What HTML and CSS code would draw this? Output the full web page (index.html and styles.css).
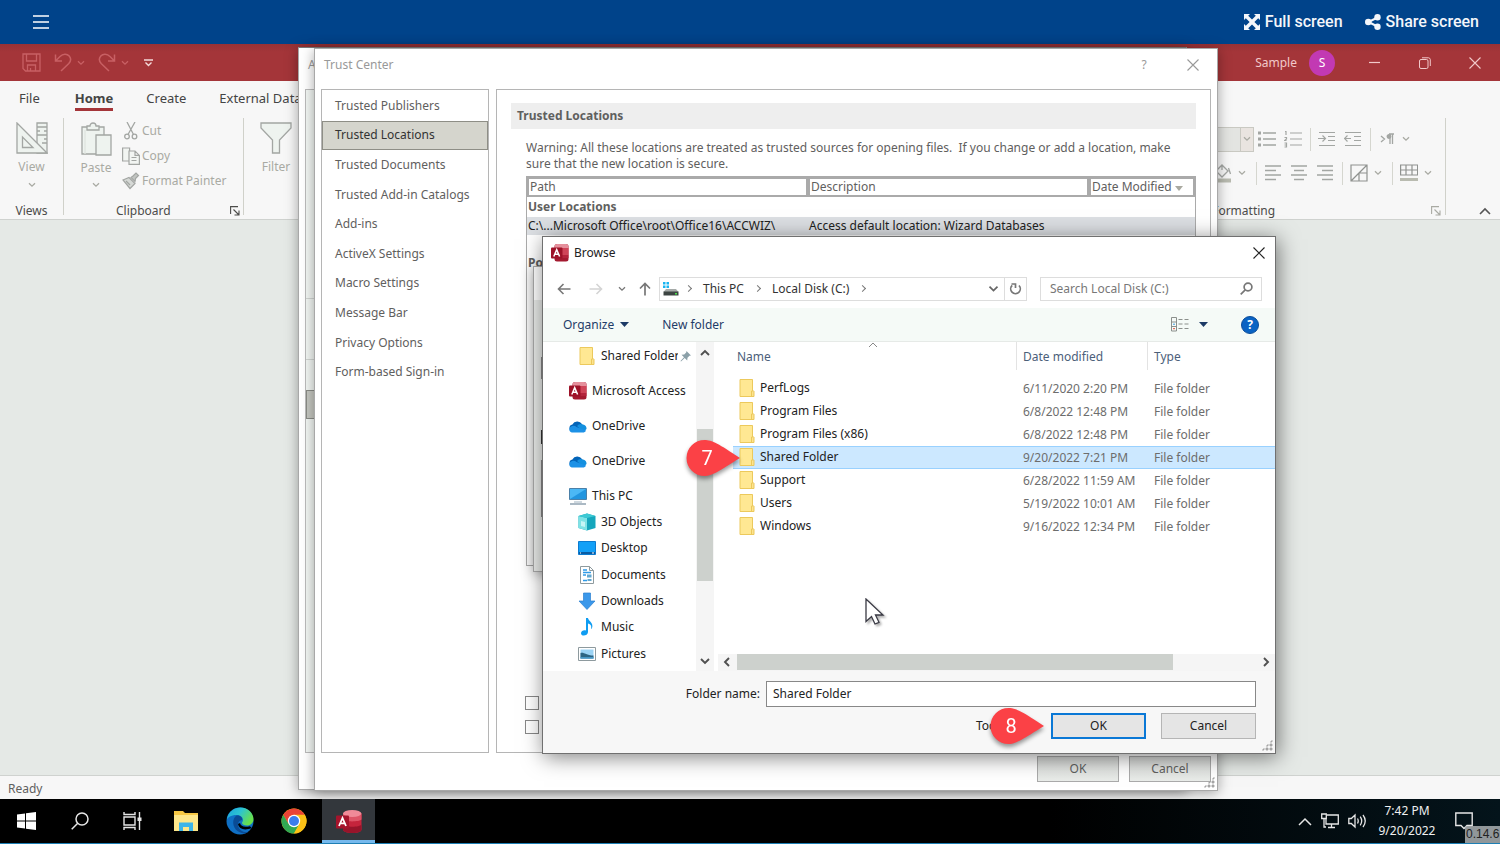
FILE: index.html
```html
<!DOCTYPE html>
<html lang="en">
<head>
<meta charset="UTF-8" />
<meta name="viewport" content="width=device-width, initial-scale=1" />
<title>Trusted Locations - Browse</title>
<link rel="stylesheet" href="styles.css">
</head>
<body>

<!-- shared icons -->
<svg class="sprite" aria-hidden="true">
  <symbol id="chev" viewBox="0 0 8 6"><path d="M1 1.2 4 4.2 7 1.2" fill="none" stroke="currentColor" stroke-width="1.3"/></symbol>
  <symbol id="close" viewBox="0 0 12 12"><path d="M.5.5l11 11M11.500.5l-11 11" fill="none" stroke="currentColor" stroke-width="1.1"/></symbol>
  <symbol id="launcher" viewBox="0 0 10 10"><path d="M.6 8V.6H8M3.500 3.500 9 9M9 4.500V9H4.500" fill="none" stroke="currentColor" stroke-width="1.100"/></symbol>
  <symbol id="folder" viewBox="0 0 16 18">
    <path d="M1 .5h12.500v11.500l1.500 1V17.500H1z" fill="#fbe08a"/>
    <path d="M1 .5h12.500V17.500H1z" fill="#ffe893"/>
    <path d="M1 .5h12.500V12M1 .5v17h14v-5.500h-2.500v5" fill="none" stroke="#ecc95c"/>
  </symbol>
  <symbol id="access" viewBox="0 0 26 24">
    <path d="M7 4v16c0 2 4 3.500 9.500 3.500S25.500 22 25.500 20V4z" fill="#c5243c"/>
    <path d="M7 15v5c0 2 4 3.500 9.500 3.500S25.500 22 25.500 20v-5c-2 3-16 3-18.500 0z" fill="#97142a"/>
    <path d="M7 4v6c2 2.500 16 2.500 18.500 0V4z" fill="#dd5467"/>
    <ellipse cx="16.200" cy="4" rx="9.200" ry="3.500" fill="#f08a98"/>
    <rect y="6" width="13" height="13" rx="1" fill="#a5142c"/>
    <path d="M3 16.500 6.500 8.500 10 16.500M4.300 13.800h4.400" fill="none" stroke="#fff" stroke-width="1.800"/>
  </symbol>
  <symbol id="access-app" viewBox="0 0 18 18">
    <rect x="3.500" width="14" height="17.500" rx="2.500" fill="#a3192f"/>
    <path d="M3.500 6V2.500A2.500 2.500 0 0 1 6 0h9a2.500 2.500 0 0 1 2.500 2.500V6z" fill="#e5909c"/>
    <path d="M3.500 4h14v7h-14z" fill="#cf4458"/>
    <path d="M3.500 11h14v3h-14z" fill="#b3233b"/>
    <rect y="3.500" width="11.500" height="11" rx="1" fill="#9d1228"/>
    <path d="M2.800 12.500 5.700 5.700l2.900 6.800M3.900 10.300h3.600" fill="none" stroke="#fff" stroke-width="1.500"/>
  </symbol>
  <symbol id="cloud" viewBox="0 0 18 13">
    <path d="M4 12a3.800 3.800 0 0 1-.6-7.500A5.500 5.500 0 0 1 13 4l2 4z" fill="#0364b8"/>
    <path d="M8 6a5 5 0 0 1 6-1.500 4 4 0 0 1 3.500 4.500l-3 3z" fill="#1490df"/>
    <path d="M4 12.500c-3 0-4-2-3.500-4 1-3 5-3.500 7-1.500l9.500 3.500c-.5 1.500-2 2-3 2z" fill="#1c91e6"/>
  </symbol>
</svg>

<header class="topbar">
  <button class="menu-btn" aria-label="Menu"><svg width="16" height="14" viewBox="0 0 16 14"><path d="M0 1h16M0 7h16M0 13h16" stroke="#fff" stroke-width="1.500"/></svg></button>
  <nav class="top-actions">
    <button><svg width="16" height="16" viewBox="0 0 16 16"><path d="M0 0h6L4.200 1.800 8 5.600l3.800-3.800L10 0h6v6l-1.800-1.800L10.400 8l3.800 3.800L16 10v6h-6l1.800-1.800L8 10.400l-3.800 3.800L6 16H0v-6l1.800 1.800L5.600 8 1.800 4.200 0 6z" fill="currentColor"/></svg>Full screen</button>
    <button><svg width="16" height="16" viewBox="0 0 16 16"><path d="M3.500 8 12.500 3.500M3.500 8l9 4.500" stroke="currentColor" stroke-width="2"/><circle cx="3.300" cy="8" r="3.300" fill="currentColor"/><circle cx="12.500" cy="3.300" r="3.200" fill="currentColor"/><circle cx="12.500" cy="12.700" r="3.200" fill="currentColor"/></svg>Share screen</button>
  </nav>
</header>

<main class="desktop">

  <!-- Access main window -->
  <section class="app">
    <div class="titlebar">
      <div class="quick">
        <button aria-label="Save"><svg width="19" height="19" viewBox="0 0 19 19" fill="none" stroke="currentColor" stroke-width="1.300"><path d="M1 1h17v17H3.500L1 15.500zM4.500 1v7h10V1M5.500 18v-6h8v6M8.500 15v3"/></svg></button>
        <button aria-label="Undo"><svg width="18" height="19" viewBox="0 0 18 19" fill="none" stroke="currentColor" stroke-width="1.500"><path d="M1.500 1.500V8H8M1.500 8l4.500-4.500C9 .5 13 .5 15.200 3c2 2.300 1.800 5-.4 7.500L7 18"/></svg></button>
        <svg class="chev" width="8" height="6"><use href="#chev"/></svg>
        <button aria-label="Redo"><svg width="18" height="19" viewBox="0 0 18 19" fill="none" stroke="currentColor" stroke-width="1.500"><path d="M16.500 1.500V8H10M16.500 8 12 3.500C9 .5 5 .5 2.800 3c-2 2.300-1.800 5 .4 7.500L11 18"/></svg></button>
        <svg class="chev" width="8" height="6"><use href="#chev"/></svg>
        <button class="more" aria-label="Customize toolbar"><svg width="9" height="8" viewBox="0 0 9 8" fill="none" stroke="currentColor" stroke-width="1.400"><path d="M0 1h9M1.500 3.500l3 3 3-3"/></svg></button>
      </div>
      <div class="account">
        <span>Sample</span><span class="avatar">S</span>
        <button aria-label="Minimize"><svg width="12" height="12" viewBox="0 0 12 12"><path d="M0 5.500h11" stroke="currentColor" stroke-width="1.200"/></svg></button>
        <button aria-label="Restore"><svg width="12" height="12" viewBox="0 0 12 12" fill="none" stroke="currentColor"><rect x=".5" y="2.500" width="8.500" height="9" rx="1.500"/><path d="M3 .8h6.500A2 2 0 0 1 11.300 2.500V9"/></svg></button>
        <button aria-label="Close"><svg width="12" height="12"><use href="#close"/></svg></button>
      </div>
    </div>

    <nav class="tabs">
      <a href="#">File</a>
      <a href="#" class="active">Home</a>
      <a href="#">Create</a>
      <a href="#">External Data</a>
    </nav>

    <div class="ribbon">
      <div class="group views">
        <button class="big"><svg width="32" height="32" viewBox="0 0 32 32" fill="#eef3ef" stroke="#a3a6a3" stroke-width="1.300"><path d="M21 1h10v30H21zM31 5h-5M31 9h-3M31 13h-5M31 17h-3M31 21h-5M21 5h5M21 9h3M21 13h5"/><path d="M1 1v30h30z"/><path d="M6.500 15v10.500H17z"/></svg>View<svg class="chev" width="8" height="6"><use href="#chev"/></svg></button>
        <div class="group-label">Views</div>
      </div>
      <div class="group clipboard">
        <div class="group-body">
          <button class="big"><svg width="32" height="34" viewBox="0 0 32 34" fill="#eef3ef" stroke="#a3a6a3" stroke-width="1.300"><path d="M2 5h22v27H2z"/><path d="M5 8v24" stroke="#dfe3df"/><path d="M7 8V4h3c0-4 6-4 6 0h3v4z"/><path d="M16 13h15v20H16z"/></svg>Paste<svg class="chev" width="8" height="6"><use href="#chev"/></svg></button>
          <div class="small-list">
            <button><svg width="18" height="18" viewBox="0 0 18 18" fill="none" stroke="#a3a6a3" stroke-width="1.300"><path d="M5 0l6.500 12.500M13 0 6 12.500"/><circle cx="5" cy="14.500" r="2.300"/><circle cx="12.500" cy="14.500" r="2.300"/></svg>Cut</button>
            <button><svg width="18" height="18" viewBox="0 0 18 18" fill="#f2f5f2" stroke="#a3a6a3" stroke-width="1.200"><path d="M.6 1h7v13h-7z"/><path d="M7 4h6l4.400 4.400V17.400H7zM13 4v4.400h4.400M9.500 10.500h5M9.500 13.500h5"/></svg>Copy</button>
            <button><svg width="18" height="18" viewBox="0 0 18 18" fill="#d6d9d6" stroke="#a3a6a3" stroke-width="1.200"><path d="M1 8l6-2.500 6 6L8 16.500z"/><path d="M9 5.500l2-1.500 3-3 2.500 2.500-3 3-.5 3z" fill="#c2c5c2"/><path d="M4 9l4 4" /></svg>Format Painter</button>
          </div>
        </div>
        <div class="group-label">Clipboard<svg width="10" height="10"><use href="#launcher"/></svg></div>
      </div>
      <div class="group filter">
        <button class="big"><svg width="32" height="32" viewBox="0 0 32 32" fill="#eef3ef" stroke="#a3a6a3" stroke-width="1.300"><path d="M1 1h30v5L19.500 18v13h-7V18L1 6z"/></svg>Filter</button>
      </div>
      <div class="group formatting">
        <div class="tool-row">
          <div class="combo"><svg class="chev" width="8" height="6"><use href="#chev"/></svg></div>
          <button aria-label="Bullets"><svg width="18" height="18" viewBox="0 0 18 18" stroke="#a3a6a3" stroke-width="1.300"><path d="M5 3h13M5 9h13M5 15h13"/><path d="M0 3h3M0 9h3M0 15h3" stroke-width="3"/></svg></button>
          <button aria-label="Numbering"><svg width="18" height="18" viewBox="0 0 18 18" fill="none" stroke="#a3a6a3" stroke-width="1.200"><path d="M6 3h12M6 9h12M6 15h12M1 1.500h1V5M.5 7.500h2V9l-2 1.500h2M.5 13h2v4h-2M.5 15h2"/></svg></button>
          <span class="vsep"></span>
          <button aria-label="Increase indent"><svg width="18" height="18" viewBox="0 0 18 18" fill="none" stroke="#a3a6a3" stroke-width="1.200"><path d="M1 2.500h16M10 6.500h7M10 10.500h7M1 15.500h16M0 8.500h7M4.500 5.500l3 3-3 3"/></svg></button>
          <button aria-label="Decrease indent"><svg width="18" height="18" viewBox="0 0 18 18" fill="none" stroke="#a3a6a3" stroke-width="1.200"><path d="M1 2.500h16M10 6.500h7M10 10.500h7M1 15.500h16M0 8.500h7M3.500 5.500l-3 3 3 3"/></svg></button>
          <span class="vsep"></span>
          <button aria-label="Text direction"><svg width="14" height="12" viewBox="0 0 14 12" fill="none" stroke="#a3a6a3" stroke-width="1.300"><path d="M1 3l3.500 3L1 9M10 1v10M12.500 1v10M14 1H9"/><circle cx="9" cy="3.500" r="1.800" fill="#a3a6a3"/></svg></button>
          <svg class="chev" width="12" height="6"><use href="#chev"/></svg>
        </div>
        <div class="tool-row second">
          <button aria-label="Background color"><svg width="20" height="20" viewBox="0 0 20 20" fill="none" stroke="#a3a6a3" stroke-width="1.300"><path d="M3 8l6-6 6 6-6 6zM9 2v5M15.500 5l2 6"/><path d="M1 17.500h17" stroke="#b9bbb0" stroke-width="4"/></svg></button>
          <svg class="chev" width="12" height="6"><use href="#chev"/></svg>
          <span class="vsep wide"></span>
          <button aria-label="Align left"><svg width="16" height="18" viewBox="0 0 16 18" stroke="#a3a6a3" stroke-width="1.300"><path d="M0 2h16M0 6.500h11M0 11h16M0 15.500h11"/></svg></button>
          <button aria-label="Center"><svg width="16" height="18" viewBox="0 0 16 18" stroke="#a3a6a3" stroke-width="1.300"><path d="M0 2h16M3 6.500h10M0 11h16M3 15.500h10"/></svg></button>
          <button aria-label="Align right"><svg width="16" height="18" viewBox="0 0 16 18" stroke="#a3a6a3" stroke-width="1.300"><path d="M0 2h16M5 6.500h11M0 11h16M5 15.500h11"/></svg></button>
          <span class="vsep"></span>
          <button aria-label="Gridlines"><svg width="18" height="18" viewBox="0 0 18 18" fill="none" stroke="#8f928f" stroke-width="1.200"><path d="M1 1h16v16H1zM1 17 17 1M9 9v8M9 9h8"/></svg></button>
          <svg class="chev" width="12" height="6"><use href="#chev"/></svg>
          <span class="vsep wide"></span>
          <button aria-label="Alternate row color"><svg width="18" height="18" viewBox="0 0 18 18" fill="none" stroke="#8f928f" stroke-width="1.200"><path d="M.6 1h17v10H.6zM.6 6h17M6 1v10M12 1v10"/><path d="M0 15.500h18" stroke="#b9bbb0" stroke-width="3"/></svg></button>
          <svg class="chev" width="12" height="6"><use href="#chev"/></svg>
        </div>
        <div class="group-label">Text Formatting<svg width="10" height="10"><use href="#launcher"/></svg></div>
      </div>
      <button class="collapse" aria-label="Collapse the ribbon"><svg width="12" height="8" viewBox="0 0 12 8"><path d="M1 7l5-5 5 5" fill="none" stroke="#555" stroke-width="1.600"/></svg></button>
    </div>

    <div class="workspace"></div>
    <div class="statusbar">Ready</div>
  </section>

  <!-- Access Options, mostly covered by Trust Center -->
  <section class="window options">
    <div class="window-title">Access Options</div>
    <div class="options-list"><span class="rule"></span><span class="rule"></span><span class="picked"></span></div>
  </section>

  <section class="window trust">
    <div class="window-title">
      <span>Trust Center</span>
      <button aria-label="Help">?</button>
      <button aria-label="Close"><svg width="12" height="12"><use href="#close"/></svg></button>
    </div>
    <div class="trust-body">
      <nav class="trust-nav">
        <div class="trust-links">
          <a href="#">Trusted Publishers</a>
          <a href="#" class="current">Trusted Locations</a>
          <a href="#">Trusted Documents</a>
          <a href="#">Trusted Add-in Catalogs</a>
          <a href="#">Add-ins</a>
          <a href="#">ActiveX Settings</a>
          <a href="#">Macro Settings</a>
          <a href="#">Message Bar</a>
          <a href="#">Privacy Options</a>
          <a href="#">Form-based Sign-in</a>
        </div>
      </nav>
      <div class="trust-panel">
        <h2>Trusted Locations</h2>
        <p>Warning: All these locations are treated as trusted sources for opening files.&nbsp; If you change or add a location, make sure that the new location is secure.</p>
        <div class="locations">
          <table>
            <colgroup><col class="c-path"><col class="c-desc"><col class="c-date"></colgroup>
            <thead>
              <tr><th>Path</th><th>Description</th><th>Date Modified <svg width="8" height="5" viewBox="0 0 8 5"><path d="M0 0h8L4 5z" fill="#a9a9a0"/></svg></th></tr>
            </thead>
            <tbody>
              <tr class="section"><td colspan="3">User Locations</td></tr>
              <tr class="chosen"><td>C:\...Microsoft Office\root\Office16\ACCWIZ\</td><td>Access default location: Wizard Databases</td><td></td></tr>
              <tr class="blank"><td colspan="3"></td></tr>
              <tr class="section"><td colspan="3">Policy Locations</td></tr>
            </tbody>
          </table>
        </div>
        <div class="checks">
          <input type="checkbox" aria-label="Allow Trusted Locations on my network">
          <input type="checkbox" aria-label="Disable all Trusted Locations">
        </div>
      </div>
    </div>
    <div class="trust-footer">
      <button>OK</button>
      <button>Cancel</button>
    </div>
    <span class="grip"></span>
  </section>

  <!-- Trusted Location dialog under the file picker -->
  <section class="window location-dialog"><span class="field path-field"></span><span class="field check-field"></span><span class="field desc-field"></span></section>

  <section class="window browse">
    <div class="browse-title">
      <svg width="18" height="18"><use href="#access-app"/></svg>
      <span>Browse</span>
      <button aria-label="Close"><svg width="12" height="12"><use href="#close"/></svg></button>
    </div>

    <div class="browse-nav">
      <button aria-label="Back"><svg width="14" height="12" viewBox="0 0 14 12" fill="none" stroke="#777" stroke-width="1.600"><path d="M13.500 6H1.500M6.500 1 1.500 6l5 5"/></svg></button>
      <button class="forward" aria-label="Forward"><svg width="14" height="12" viewBox="0 0 14 12" fill="none" stroke="#d4d4d4" stroke-width="1.600"><path d="M.5 6h12M7.500 1l5 5-5 5"/></svg></button>
      <button class="recent" aria-label="Recent locations"><svg width="8" height="6"><use href="#chev"/></svg></button>
      <button class="up" aria-label="Up"><svg width="12" height="14" viewBox="0 0 12 14" fill="none" stroke="#777" stroke-width="1.700"><path d="M6 13.500V1.500M1 6.500l5-5 5 5"/></svg></button>
      <div class="address">
        <svg width="17" height="14" viewBox="0 0 17 14"><path d="M1 0h2.500v2.500H1zM4.500 0H7v2.500H4.500zM1 3.500h2.500V6H1zM4.500 3.500H7V6H4.500z" fill="#19b5f1"/><path d="M4 7h10l2.500 3h-15z" fill="#a5aaa8"/><path d="M1.500 9.500h15V13.500h-15z" fill="#3d4442"/><path d="M13 11h2v1.500h-2z" fill="#4be04b"/></svg>
        <span class="crumb-sep"></span><a href="#">This PC</a>
        <span class="crumb-sep"></span><a href="#">Local Disk (C:)</a>
        <span class="crumb-sep"></span>
        <button class="addr-drop" aria-label="Previous locations"><svg width="11" height="8"><use href="#chev"/></svg></button>
        <button class="refresh" aria-label="Refresh"><svg width="13" height="13" viewBox="0 0 13 13" fill="none" stroke="#777" stroke-width="1.700"><path d="M10 3.500A4.800 4.800 0 1 1 3.200 3.300M2.500 2h4v4"/></svg></button>
      </div>
      <div class="search">
        <input type="text" placeholder="Search Local Disk (C:)" aria-label="Search Local Disk (C:)">
        <svg width="13" height="13" viewBox="0 0 13 13" fill="none" stroke="#777" stroke-width="1.700"><circle cx="8" cy="5" r="3.900"/><path d="M5.200 7.800.7 12.300"/></svg>
      </div>
    </div>

    <div class="browse-tools">
      <button>Organize <svg width="9" height="5" viewBox="0 0 9 5"><path d="M0 0h9L4.500 5z" fill="#1c3a66"/></svg></button>
      <button>New folder</button>
      <button class="layout" aria-label="Change your view"><svg width="18" height="15" viewBox="0 0 18 15" fill="none" stroke="#8b8f8c"><path d="M.5.5h5v13.500h-5zM.5 5h5M.5 9.500h5"/><path d="M7.500 2.500h4M13.500 2.500h4M7.500 7h4M13.500 7h4M7.500 11.500h4M13.500 11.500h4" stroke-width="1.200"/><path d="M2 7.200h2" stroke="#3b9be0"/><path d="M2 11.700h2" stroke="#e0503b"/></svg><svg width="9" height="5" viewBox="0 0 9 5"><path d="M0 0h9L4.500 5z" fill="#1c3a66"/></svg></button>
      <button class="help" aria-label="Help">?</button>
    </div>

    <div class="browse-main">
      <div class="tree">
        <ul>
          <li class="nested"><a href="#"><svg width="18" height="18"><use href="#folder"/></svg><span class="cut">Shared Folder</span><svg class="pin" width="11" height="11" viewBox="0 0 11 11"><path d="M6.500 0 11 4.500l-1.500.3-2 2-.3 2.700L4.700 7 1 10.500.5 10 4 6.300 1.500 3.800l2.700-.3 2-2z" fill="#8ba0a8"/></svg></a></li>
          <li><a href="#"><svg width="18" height="18"><use href="#access-app"/></svg>Microsoft Access</a></li>
          <li><a href="#"><svg width="18" height="13"><use href="#cloud"/></svg>OneDrive</a></li>
          <li><a href="#"><svg width="18" height="13"><use href="#cloud"/></svg>OneDrive</a></li>
          <li><a href="#"><svg width="18" height="17" viewBox="0 0 18 17"><path d="M.5.5h17v11H.5z" fill="#4bb8f5" stroke="#4b80a8"/><path d="M1 11 17 1v10z" fill="#2195df"/><path d="M5 14h8" stroke="#9fb2c0"/><path d="M1 16h16" stroke="#8fa2b0" stroke-width="1.500"/></svg>This PC</a></li>
        </ul>
        <ul class="sub">
          <li><a href="#"><svg width="18" height="18" viewBox="0 0 18 18"><path d="M.5 3 9 .5 17.500 3v12L9 17.500.5 15z" fill="#15a6bc"/><path d="M.5 3 9 5v12.500L.5 15z" fill="#7fe3e6"/><path d="M.5 3 9 .5 17.500 3 9 5z" fill="#3cc9d4"/><path d="M3 8l4 1v5l-4-1z" fill="#c5f5f5"/></svg>3D Objects</a></li>
          <li><a href="#"><svg width="18" height="14" viewBox="0 0 18 14"><path d="M.5.5h17v13H.5z" fill="#13a0f7" stroke="#0c7bd0"/><path d="M1 12h16" stroke="#0a5ca3" stroke-width="2"/><path d="M2 12h1M14 12h2" stroke="#fff"/></svg>Desktop</a></li>
          <li><a href="#"><svg width="18" height="18" viewBox="0 0 18 18"><path d="M2.500.5h9l4 4v13h-13z" fill="#fff" stroke="#8e9a9e"/><path d="M11.500.5v4h4" fill="none" stroke="#8e9a9e"/><path d="M5 4h4M5 6.500h8M5 9h3M5 14.500h4" stroke="#2f9be8" stroke-width="1.300"/><path d="M9 8.500h4.500v3H9zM5 11.500h3M9.500 13h4v2h-4z" fill="#62a8d0"/></svg>Documents</a></li>
          <li><a href="#"><svg width="18" height="18" viewBox="0 0 18 18"><path d="M5.500 1h7v8H17L9 17.500 1 9h4.500z" fill="#3b98ea" stroke="#2a7fd0" stroke-width=".7"/></svg>Downloads</a></li>
          <li><a href="#"><svg width="18" height="18" viewBox="0 0 18 18"><path d="M8 0h2c.3 3 5 4 4.300 9-.4 2-1.300 2-1.300 1.500.8-2.500-.5-4.500-3-5V14c0 4-7 5-7 1.300 0-2.500 3-3.800 5-2.800z" fill="#0f9df2"/></svg>Music</a></li>
          <li><a href="#"><svg width="18" height="14" viewBox="0 0 18 14"><path d="M.5.5h17v13H.5z" fill="#fff" stroke="#8e9a9e"/><path d="M2.500 2.500h13v9h-13z" fill="#9bd3f5"/><path d="M2.500 6c3-1.500 5 2 13 2.500v3h-13z" fill="#2d6583"/><path d="M2.500 10.200h13v1.300h-13z" fill="#4ba3d6"/></svg>Pictures</a></li>
        </ul>
      </div>
      <div class="vscroll">
        <svg width="10" height="7" viewBox="0 0 10 7"><path d="M1 6l4-4 4 4" fill="none" stroke="#505050" stroke-width="1.900"/></svg>
        <span class="thumb"></span>
        <svg width="10" height="7" viewBox="0 0 10 7"><path d="M1 1l4 4 4-4" fill="none" stroke="#505050" stroke-width="1.900"/></svg>
      </div>
      <div class="files">
        <svg class="sort" width="10" height="6" viewBox="0 0 10 6"><path d="M1 5l4-4 4 4" fill="none" stroke="#888"/></svg>
        <table>
          <colgroup><col class="f-name"><col class="f-date"><col></colgroup>
          <thead>
            <tr><th>Name</th><th>Date modified</th><th>Type</th></tr>
          </thead>
          <tbody>
            <tr><td><svg width="16" height="18"><use href="#folder"/></svg>PerfLogs</td><td>6/11/2020 2:20 PM</td><td>File folder</td></tr>
            <tr><td><svg width="16" height="18"><use href="#folder"/></svg>Program Files</td><td>6/8/2022 12:48 PM</td><td>File folder</td></tr>
            <tr><td><svg width="16" height="18"><use href="#folder"/></svg>Program Files (x86)</td><td>6/8/2022 12:48 PM</td><td>File folder</td></tr>
            <tr class="selected"><td><svg width="16" height="18"><use href="#folder"/></svg>Shared Folder</td><td>9/20/2022 7:21 PM</td><td>File folder</td></tr>
            <tr><td><svg width="16" height="18"><use href="#folder"/></svg>Support</td><td>6/28/2022 11:59 AM</td><td>File folder</td></tr>
            <tr><td><svg width="16" height="18"><use href="#folder"/></svg>Users</td><td>5/19/2022 10:01 AM</td><td>File folder</td></tr>
            <tr><td><svg width="16" height="18"><use href="#folder"/></svg>Windows</td><td>9/16/2022 12:34 PM</td><td>File folder</td></tr>
          </tbody>
        </table>
        <div class="hscroll">
          <svg width="7" height="10" viewBox="0 0 7 10"><path d="M6 1 2 5l4 4" fill="none" stroke="#505050" stroke-width="1.900"/></svg>
          <span class="track"><span class="thumb"></span></span>
          <svg width="7" height="10" viewBox="0 0 7 10"><path d="M1 1l4 4-4 4" fill="none" stroke="#505050" stroke-width="1.900"/></svg>
        </div>
      </div>
    </div>

    <div class="browse-footer">
      <div class="name-row">
        <label for="folderName">Folder name:</label>
        <input type="text" id="folderName" value="Shared Folder">
      </div>
      <div class="button-row">
        <button class="tools">Tools</button>
        <button class="default">OK</button>
        <button>Cancel</button>
      </div>
    </div>
    <span class="grip"></span>
  </section>

  <!-- step markers -->
  <div class="step step-7"><svg width="56" height="38" viewBox="0 0 56 38"><path d="M18.500 1C26 1 33 5 54 19 33 32 26 37 18.500 37A18 18 0 0 1 18.500 1z" fill="#fb4146"/></svg><span>7</span></div>
  <div class="step step-8"><svg width="56" height="38" viewBox="0 0 56 38"><path d="M18.500 1C26 1 33 5 54 19 33 32 26 37 18.500 37A18 18 0 0 1 18.500 1z" fill="#fb4146"/></svg><span>8</span></div>

  <svg class="pointer" width="20" height="28" viewBox="0 0 20 28"><path d="M1 1v22.500l5.500-5L10 26l4-1.700-3.500-7.300H18z" fill="#fff" stroke="#3a3a44" stroke-width="1.300"/></svg>
</main>

<footer class="taskbar">
  <button aria-label="Start"><svg width="19" height="18" viewBox="0 0 19 18"><path d="M0 2.500 8 1.400v7.100H0zM9 1.200 19 0v8.500H9zM0 9.500h8v7.100l-8-1.100zM9 9.500h10V18L9 16.800z" fill="#fff"/></svg></button>
  <button aria-label="Search"><svg width="18" height="18" viewBox="0 0 18 18" fill="none" stroke="#e6e6e6" stroke-width="1.500"><circle cx="11" cy="7" r="6"/><path d="M6.700 11.300.7 17.300"/></svg></button>
  <button aria-label="Task view"><svg width="19" height="18" viewBox="0 0 19 18" fill="none" stroke="#e6e6e6" stroke-width="1.400"><path d="M1 5h11v8H1zM1 0v2.500h11V0M1 18v-2.500h11V18M16.500 0v18"/><path d="M14.500 5.500h4v3.500h-4z" fill="#e6e6e6" stroke="none"/></svg></button>
  <button class="pinned" aria-label="File Explorer"><svg width="24" height="21" viewBox="0 0 24 21"><path d="M0 0h9l2 2h13v18H0z" fill="#f6c744"/><path d="M0 4h24v16H0z" fill="#fde68a"/><path d="M5 20v-8.500h14V20h-4v-4H9v4z" fill="#3cb4e8"/></svg></button>
  <button class="pinned" aria-label="Edge"><svg width="28" height="28" viewBox="0 0 28 28"><defs><linearGradient id="eg" x1="0" y1="0" x2="1" y2=".5"><stop offset="0" stop-color="#1aa3dd"/><stop offset=".5" stop-color="#2cc3d2"/><stop offset="1" stop-color="#68e04c"/></linearGradient></defs><circle cx="14" cy="14" r="13.500" fill="#0f6fc4"/><path d="M.8 13C2 4 9 .5 14.500.5c8 0 13 6 13 11.500 0 4-3 6.500-6.500 6.500-3 0-5-1-5-2.500 0-1 1-1.500 1-3C17 10 14 8 10.500 8 5 8 1.500 10.500.8 13z" fill="url(#eg)"/><path d="M10.500 8.500c-5 3.500-4 12 1 15.500 4 2.500 8 3.500 10.500 1-4 1-10-2-10-7.500 0-3 2-4 4-4.500 1-2.500-2-5-5.500-4.500z" fill="#0a4b95"/><path d="M12 17c1 5 6.500 7 13.500 4 0 0-1-1.500-1.500-1.800-6 1.500-9 .3-10-3.200z" fill="#000"/></svg></button>
  <button class="pinned" aria-label="Chrome"><svg width="26" height="26" viewBox="0 0 26 26"><circle cx="13" cy="13" r="12.500" fill="#fbc116"/><path d="M2.200 6.700A12.500 12.500 0 0 1 23.800 6.700H13L7.600 16.100z" fill="#ea4335"/><path d="M2.200 6.700A12.500 12.500 0 0 0 13 25.500l5.400-9.400H7.600z" fill="#31a852"/><path d="M23.800 6.700A12.500 12.500 0 0 1 13 25.500l5.400-9.400L18 9z" fill="#fbc116"/><circle cx="13" cy="13" r="6.200" fill="#fff"/><circle cx="13" cy="13" r="5" fill="#3b7ded"/></svg></button>
  <button class="pinned running" aria-label="Access"><svg width="26" height="25"><use href="#access"/></svg></button>
  <div class="tray">
    <button aria-label="Show hidden icons"><svg width="14" height="9" viewBox="0 0 14 9"><path d="M1 8l6-6 6 6" fill="none" stroke="#e6e6e6" stroke-width="1.500"/></svg></button>
    <button aria-label="Network"><svg width="18" height="16" viewBox="0 0 18 16" fill="none" stroke="#e6e6e6" stroke-width="1.300"><path d="M6 2h11.300v9H5V6M10.500 11v3.500M7 14.500h7M.7 1h4.600v4.500H.7zM3 5.500V14h2"/></svg></button>
    <button aria-label="Volume"><svg width="19" height="16" viewBox="0 0 19 16" fill="none" stroke="#e6e6e6" stroke-width="1.300"><path d="M.8 5.500h2.500L7 2v12l-3.700-3.500H.8zM9.500 5.500q1.500 2.500 0 5M12.200 3.700q3 4.300 0 8.600M15 2q4.500 6 0 12"/></svg></button>
    <div class="clock"><span>7:42 PM</span><span>9/20/2022</span></div>
    <button class="notes" aria-label="Notifications"><svg width="18" height="18" viewBox="0 0 18 18"><path d="M.8 1h16.400v12.500H12l-3 3-3-3H.8z" fill="none" stroke="#e6e6e6" stroke-width="1.400"/></svg></button>
  </div>
  <span class="version">0.14.6</span>
</footer>

</body>
</html>
```

FILE: styles.css
```css
:root {
  --blue: #00438a;
  --access-red: #a43539;
  --ribbon: #f7f7f7;
  --canvas: #e5e9e6;
  --muted: #a9aaa3;
  --text: #5f605e;
}
* {
  box-sizing: border-box;
}
body {
  margin: 0;
  height: 100vh;
  display: flex;
  flex-direction: column;
  overflow: hidden;
  font-family: "Noto Sans", "Open Sans", sans-serif;
  font-size: 12px;
  line-height: 16px;
  color: var(--text);
}
button {
  font: inherit;
  color: inherit;
  background: none;
  border: 0;
  padding: 0;
  display: flex;
  align-items: center;
  justify-content: center;
}
input {
  font: inherit;
  margin: 0;
}
a {
  color: inherit;
  text-decoration: none;
}
ul {
  list-style: none;
  margin: 0;
  padding: 0;
}
svg {
  flex: none;
}
.sprite {
  position: absolute;
  width: 0;
  height: 0;
}

/* top bar */
.topbar {
  height: 44px;
  padding: 0 21px 0 33px;
  display: flex;
  align-items: center;
  justify-content: space-between;
  background: var(--blue);
  color: #f4f6fa;
  font: 500 16px/20px Roboto, sans-serif;
}
.top-actions {
  display: flex;
  gap: 22px;
}
.top-actions button {
  gap: 5px;
}

/* Access window */
.desktop {
  flex: 1;
  min-height: 0;
  position: relative;
  display: flex;
}
.app {
  flex: 1;
  display: flex;
  flex-direction: column;
  background: var(--canvas);
}
.titlebar {
  height: 37px;
  display: flex;
  align-items: center;
  justify-content: space-between;
  padding: 0 19px 0 22px;
  background: linear-gradient(#983135, var(--access-red) 8px);
}
.quick {
  display: flex;
  align-items: center;
  gap: 5px;
  color: #c86064;
}
.quick button:nth-of-type(2),
.quick button:nth-of-type(3) {
  margin-left: 8px;
}
.quick .more {
  margin-left: 10px;
  color: #f4d9da;
}
.account {
  display: flex;
  align-items: center;
  color: #f2c9ca;
}
.account button {
  width: 12px;
  margin-left: 38px;
}
.account .avatar + button {
  margin-left: 34px;
}
.avatar {
  width: 26px;
  height: 26px;
  margin-left: 12px;
  border-radius: 50%;
  background: #c239b3;
  color: #fff;
  text-align: center;
  line-height: 26px;
}
.tabs {
  height: 37px;
  padding: 8px 19px 0;
  display: flex;
  align-items: flex-start;
  background: var(--ribbon);
  font-size: 13px;
  line-height: 18px;
  color: #444;
  gap: 33px;
}
.tabs a:first-child {
  margin-right: 2px;
}
.tabs .active {
  font-weight: bold;
  border-bottom: 3px solid var(--access-red);
  padding-bottom: 1px;
}
.ribbon {
  height: 102px;
  padding-bottom: 4px;
  display: flex;
  background: var(--ribbon);
  border-bottom: 1px solid #cfd2cf;
  color: var(--muted);
}
.group {
  position: relative;
  display: flex;
  flex-direction: column;
  border-right: 1px solid #d0d1ca;
}
.group.filter {
  border: 0;
}
.views {
  width: 64px;
}
.clipboard {
  width: 180px;
}
.filter {
  width: 64px;
}
.big {
  flex-direction: column;
  justify-content: flex-start;
  padding-top: 4px;
  line-height: 18px;
  gap: 4px;
}
.big .chev {
  margin-top: 2px;
}
.group-body {
  display: flex;
}
.clipboard .big {
  width: 58px;
  margin-left: 3px;
  gap: 3px;
}
.small-list {
  display: flex;
  flex-direction: column;
  margin-left: -3px;
}
.small-list button {
  height: 25px;
  gap: 2px;
  justify-content: flex-start;
}
/* the labels reach past the group dividers */
.group-label {
  margin-top: auto;
  margin-bottom: -4px;
  display: flex;
  align-items: center;
  justify-content: center;
  color: #4c4c4a;
  line-height: 16px;
}
.clipboard .group-label {
  padding-left: 52px;
  padding-right: 3px;
  justify-content: space-between;
}
.formatting {
  width: 260px;
  margin-left: auto;
}
.formatting .group-label {
  justify-content: space-between;
  padding-right: 4px;
}
.formatting .group-label svg {
  color: var(--muted);
}
.tool-row {
  height: 34px;
  margin-top: 4px;
  display: flex;
  align-items: center;
}
.tool-row.second {
  margin: 0 0 0 24px;
}
.tool-row button {
  width: 26px;
}
.combo {
  width: 68px;
  height: 25px;
  border: 1px solid #c9c9c2;
  background: linear-gradient(90deg, #e3e4e1 53px, #c9c9c2 53px 54px, #e9e4e0 54px);
  display: flex;
  align-items: center;
  justify-content: flex-end;
  padding-right: 2px;
}
.vsep {
  width: 1px;
  height: 23px;
  margin: 0 3px 0 4px;
  background: #d5d6cf;
}
.vsep.wide {
  margin-left: 8px;
}
.collapse {
  width: 54px;
  padding: 88px 0 0 24px;
}
.workspace {
  flex: 1;
}
.statusbar {
  height: 24px;
  padding: 4px 8px 0;
  line-height: 18px;
  background: var(--ribbon);
  border-top: 1px solid #cfd2cf;
}

/* windows */
.window {
  position: absolute;
  background: #fff;
  border: 1px solid #a8a8a8;
  box-shadow: 0 2px 12px rgba(0, 0, 0, 0.35);
}
.window-title {
  height: 34px;
  display: flex;
  align-items: center;
  color: #999;
  padding-left: 9px;
}
.window-title span {
  flex: 1;
}
.options {
  left: 298px;
  top: 3px;
  bottom: 9px;
  width: 889px;
  border-top-color: #777;
}
.options .window-title {
  width: 18px;
  overflow: hidden;
  white-space: nowrap;
}
.options-list {
  height: 664px;
  margin: 7px 6px 0;
  border: 1px solid #bbb;
  background: #f3f7f4;
  display: flex;
  flex-direction: column;
}
.rule {
  height: 1px;
  background: #d2d6d3;
}
.rule:first-child {
  margin-top: 208px;
}
.rule + .rule {
  margin-top: 60px;
}
.picked {
  height: 29px;
  margin-top: 30px;
  background: #c6c8c1;
  border: 1px solid #8a8c86;
}
.trust {
  left: 314px;
  top: 4px;
  bottom: 8px;
  width: 904px;
  display: flex;
  flex-direction: column;
  padding: 0 6px;
}
.trust .window-title {
  height: 32px;
  padding: 0 12px 0 3px;
}
.trust .window-title button {
  width: 12px;
  margin-left: 37px;
}
.trust-body {
  flex: 1;
  margin-top: 8px;
  display: flex;
  gap: 7px;
}
.trust-nav {
  width: 168px;
  border: 1px solid #b5b5b5;
}
.trust-links {
  height: 297px;
  padding-top: 1px;
  display: flex;
  flex-direction: column;
}
.trust-links a {
  flex: 1;
  display: flex;
  align-items: center;
  padding-left: 12px;
  border: 1px solid transparent;
}
.trust-links .current {
  background: #d5d5cd;
  border-color: #8e8e86;
  color: #333;
}
.trust-panel {
  flex: 1;
  min-width: 0;
  border: 1px solid #b5b5b5;
  padding: 13px 14px 0;
  display: flex;
  flex-direction: column;
}
.trust-panel h2 {
  margin: 0;
  height: 26px;
  padding: 1px 0 0 6px;
  background: #eee;
  font-size: 12px;
  line-height: 24px;
}
.trust-panel p {
  margin: 11px 0 0 15px;
  line-height: 16px;
}
.locations {
  height: 390px;
  margin: 4px 0 0 15px;
  border: 1px solid #aaa;
}
.locations table {
  width: 100%;
  table-layout: fixed;
  border-spacing: 0;
}
.locations th {
  height: 20px;
  padding: 0 1px;
  border: 2px solid #aaa;
  font-weight: normal;
  text-align: left;
  line-height: 16px;
  white-space: nowrap;
}
.locations td {
  height: 18px;
  padding: 0 1px;
  line-height: 18px;
  white-space: nowrap;
}
.c-path,
.c-desc {
  width: 281px;
}
.locations .section td {
  height: 20px;
  font-weight: bold;
}
.locations .chosen {
  background: #dcdfe3;
  color: #222;
}
.checks {
  margin: auto 0 18px 14px;
  display: flex;
  flex-direction: column;
  gap: 10px;
}
.checks input {
  appearance: none;
  width: 14px;
  height: 14px;
  border: 1px solid #888;
  background: #fff;
}
.trust-footer {
  display: flex;
  justify-content: flex-end;
  gap: 10px;
  padding: 3px 0 8px;
}
.trust-footer button {
  width: 82px;
  height: 26px;
  border: 1px solid #aaa;
  background: linear-gradient(#d6d8d6, #e9ece9);
}
.grip {
  position: absolute;
  right: 2px;
  bottom: 2px;
  width: 12px;
  height: 12px;
  background: radial-gradient(circle, #a5a5a5 1px, transparent 2px) 0 0 / 4px 4px;
  clip-path: polygon(100% 0, 100% 100%, 0 100%);
}
.location-dialog {
  left: 533px;
  top: 222px;
  width: 600px;
  height: 306px;
  padding-left: 7px;
  background: linear-gradient(#fff 33px, #e9ebe9 33px);
}
.field {
  display: block;
  border: 1px solid #888;
}
.path-field {
  margin-top: 90px;
  height: 22px;
}
.check-field {
  margin-top: 51px;
  height: 14px;
  border-color: #333;
}
.desc-field {
  margin-top: 16px;
  height: 57px;
}

/* browse dialog */
.browse {
  left: 542px;
  top: 192px;
  bottom: 45px;
  width: 734px;
  display: flex;
  flex-direction: column;
  border-color: #707070;
  box-shadow: 2px 3px 20px rgba(0, 0, 0, 0.5);
  color: #222;
}
.browse-title {
  height: 32px;
  padding: 0 10px 0 8px;
  display: flex;
  align-items: center;
  gap: 5px;
}
.browse-title button {
  margin-left: auto;
}
.browse-nav {
  height: 39px;
  padding: 0 13px 0 8px;
  display: flex;
  align-items: center;
  color: #777;
}
.browse-nav > button {
  width: 26px;
  margin-right: 6px;
}
.browse-nav > .forward {
  margin-right: 3px;
}
.browse-nav > .recent {
  width: 20px;
  margin: 0;
}
.browse-nav > .up {
  margin: 0 1px 0 0;
}
.address {
  flex: 1;
  height: 24px;
  display: flex;
  align-items: center;
  border: 1px solid #ddd;
  padding-left: 2px;
  color: #333;
}
.address a {
  margin-right: 4px;
}
.crumb-sep {
  width: 5px;
  height: 5px;
  margin: 0 12px 0 7px;
  border: solid #777;
  border-width: 1px 1px 0 0;
  transform: rotate(45deg);
}
.addr-drop {
  margin-left: auto;
  width: 22px;
  color: #666;
}
.refresh {
  width: 22px;
  height: 22px;
  border-left: 1px solid #ddd;
}
.search {
  width: 222px;
  height: 24px;
  margin-left: 13px;
  padding: 0 8px 0 9px;
  display: flex;
  align-items: center;
  border: 1px solid #ddd;
}
.search input {
  flex: 1;
  min-width: 0;
  border: 0;
  padding: 0;
  outline: none;
}
.search input::placeholder {
  color: #777;
}
.browse-tools {
  height: 34px;
  padding: 0 16px 0 20px;
  display: flex;
  align-items: center;
  gap: 33px;
  background: #f5faf7;
  border-bottom: 1px solid #e6eae7;
  color: #1f3c68;
}
.browse-tools button {
  gap: 6px;
}
.browse-tools .layout {
  margin-left: auto;
  gap: 10px;
}
.browse-tools .help {
  width: 18px;
  height: 18px;
  border-radius: 50%;
  background: #0a63c4;
  border: 1px solid #0b4d9a;
  color: #fff;
  font-weight: bold;
}
.browse-main {
  flex: 1;
  min-height: 0;
  display: flex;
}
.tree {
  width: 153px;
  padding-top: 1px;
}
.tree ul {
  display: flex;
  flex-direction: column;
  gap: 9px;
}
.tree .sub {
  height: 158px;
  gap: 0;
}
.sub li {
  flex: 1;
  display: flex;
}
.tree a {
  height: 26px;
  padding-left: 26px;
  display: flex;
  align-items: center;
  gap: 5px;
  white-space: nowrap;
}
.tree .nested a,
.tree .sub a {
  padding-left: 35px;
}
.cut {
  width: 77px;
  overflow: hidden;
}
.tree .pin {
  margin-left: -3px;
}
.vscroll {
  width: 18px;
  padding: 7px 0 6px;
  display: flex;
  flex-direction: column;
  align-items: center;
  justify-content: space-between;
  background: #f5f5f5;
}
.vscroll .thumb {
  width: 16px;
  height: 152px;
  margin-top: 71px;
  margin-bottom: 75px;
  background: #cdd1cd;
}
.files {
  flex: 1;
  position: relative;
  display: flex;
  flex-direction: column;
  padding-left: 4px;
}
.sort {
  position: absolute;
  left: 154px;
  top: 0;
}
.files table {
  margin-left: 15px;
  table-layout: fixed;
  border-spacing: 0;
}
.files th {
  height: 28px;
  padding: 1px 0 0 6px;
  border-left: 1px solid #e3e3e3;
  font-weight: normal;
  text-align: left;
  color: #4c607a;
}
.files th:first-child {
  border: 0;
  padding-left: 4px;
}
.f-name {
  width: 283px;
}
.f-date {
  width: 131px;
}
.files tbody::before {
  content: "";
  display: block;
  height: 7px;
}
.files td {
  height: 23px;
  padding: 0 0 0 7px;
  border: solid transparent;
  border-width: 1px 0;
  color: #6d6d6d;
  white-space: nowrap;
}
.files td:first-child {
  padding-left: 6px;
  color: #222;
}
.files td svg {
  vertical-align: middle;
  margin: -2px 5px 0 0;
}
.files .selected td {
  background: #cce8ff;
  border-color: #99d1ff;
}
.hscroll {
  height: 17px;
  margin-top: auto;
  padding: 0 5px 1px;
  display: flex;
  align-items: center;
  gap: 7px;
  background: #f5f5f5;
}
.track {
  flex: 1;
  display: flex;
}
.hscroll .thumb {
  width: 84%;
  height: 16px;
  background: #cdd1cd;
}
.browse-footer {
  padding: 10px 19px 14px;
  background: #f7f7f7;
}
.name-row {
  display: flex;
  align-items: center;
  justify-content: flex-end;
  gap: 6px;
}
.name-row input {
  width: 490px;
  height: 26px;
  padding: 0 6px 2px;
  border: 1px solid #888;
  background: #fff;
  color: #222;
}
.button-row {
  margin-top: 6px;
  display: flex;
  justify-content: flex-end;
  gap: 15px;
}
.button-row button {
  width: 95px;
  height: 26px;
  border: 1px solid #b5b5b5;
  background: #e5e5e5;
}
.button-row .default {
  border: 2px solid #0a78d6;
}
.button-row .tools {
  width: 60px;
  border: 0;
  background: none;
  justify-content: flex-start;
}

/* step markers */
.step {
  position: absolute;
  width: 56px;
  height: 38px;
  filter: drop-shadow(0 3px 2px rgba(0, 0, 0, 0.4));
}
.step span {
  position: absolute;
  left: 0;
  top: 9px;
  width: 42px;
  text-align: center;
  color: #fff;
  font: 20px/20px Roboto, sans-serif;
}
.step-7 {
  left: 686px;
  top: 395px;
}
.step-8 {
  left: 990px;
  top: 663px;
}
.pointer {
  position: absolute;
  left: 865px;
  top: 554px;
  filter: drop-shadow(2px 2px 1px rgba(0, 0, 0, 0.3));
}

/* taskbar */
.taskbar {
  position: relative;
  height: 45px;
  display: flex;
  background: linear-gradient(90deg, #000, #000 70%, #04141b);
  border-bottom: 1px solid #1d7fb4;
  color: #f0f0f0;
}
.taskbar > button {
  width: 53px;
}
.taskbar > .pinned {
  width: 54px;
}
.taskbar > .running {
  width: 53px;
  margin-left: 1px;
  padding-top: 3px;
  background: #33373c;
  border-bottom: 3px solid #76b9ed;
}
.tray {
  margin-left: auto;
  display: flex;
  align-items: center;
  gap: 9px;
  padding-right: 27px;
}
.clock {
  width: 62px;
  margin: 0 8px 0 0;
  display: flex;
  flex-direction: column;
  align-items: center;
  line-height: 20px;
}
.version {
  position: absolute;
  right: 0;
  bottom: 0;
  width: 35px;
  padding-left: 1px;
  overflow: hidden;
  background: rgba(170, 175, 178, 0.85);
  color: #222;
  font: 12px/17px "Liberation Sans", sans-serif;
}
```
